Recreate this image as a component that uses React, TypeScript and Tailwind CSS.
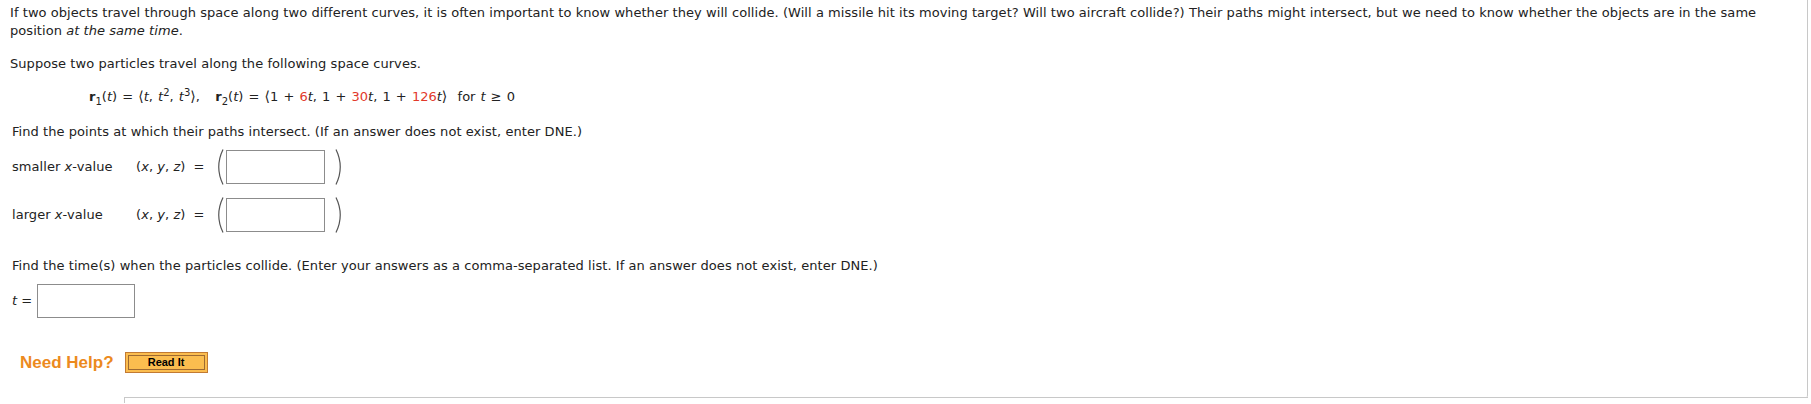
import React from "react";

const LParen = () => (
  <svg width="12" height="38" viewBox="0 0 12 38" className="block">
    <path d="M10 1.5 Q1.5 19 10 36.5" fill="none" stroke="#555" strokeWidth="1.2" />
  </svg>
);
const RParen = () => (
  <svg width="12" height="38" viewBox="0 0 12 38" className="block">
    <path d="M2 1.5 Q10.5 19 2 36.5" fill="none" stroke="#555" strokeWidth="1.2" />
  </svg>
);

const Red = ({ children }: { children: React.ReactNode }) => (
  <span className="text-[#e2392b]">{children}</span>
);

const PointRow = ({ label, className }: { label: React.ReactNode; className: string }) => (
  <div className={`flex items-center h-[34px] ${className}`}>
    <div className="w-[126px] pl-[2px]">{label}</div>
    <span>
      (<i>x</i>, <i>y</i>, <i>z</i>)
    </span>
    <span className="ml-[8px]">=</span>
    <div className="ml-[9px]">
      <LParen />
    </div>
    <div className="ml-[1px] w-[99px] h-[34px] border border-[#8c8c8c] bg-white" />
    <div className="ml-[9px]">
      <RParen />
    </div>
  </div>
);

export default function App() {
  return (
    <div
      className="w-[1811px] h-[404px] overflow-hidden bg-white text-[#222] text-[13px] leading-[18px] tracking-[0.06px]"
      style={{ fontFamily: '"DejaVu Sans", Verdana, sans-serif' }}
    >
      <div className="w-[1808px] h-[398px] border-r border-[#c8c8c8] rounded-br-[3px] pl-[10px] pt-[4px]">
        <p>
          If two objects travel through space along two different curves, it is often important to know whether they
          will collide. (Will a missile hit its moving target? Will two aircraft collide?) Their paths might intersect,
          but we need to know whether the objects are in the same
          <br />
          position <i>at the same time</i>.
        </p>
        <p className="mt-[15px]">Suppose two particles travel along the following space curves.</p>
        <div className="mt-[14px] ml-[79px] whitespace-pre text-[13px] [word-spacing:1px] tracking-normal">
          <b>r</b>
          <sub className="text-[10px] relative top-[4px]">1</sub>(<i>t</i>) = <span className="text-[14px]">⟨</span>
          <i>t</i>, <i>t</i>
          <sup className="text-[10px]">2</sup>, <i>t</i>
          <sup className="text-[10px]">3</sup>
          <span className="text-[14px]">⟩</span>,{"   "}
          <b>r</b>
          <sub className="text-[10px] relative top-[4px]">2</sub>(<i>t</i>) = <span className="text-[14px]">⟨</span>1 +{" "}
          <Red>6</Red>
          <i>t</i>, 1 + <Red>30</Red>
          <i>t</i>, 1 + <Red>126</Red>
          <i>t</i>
          <span className="text-[14px]">⟩</span>
          {"  "}for <i>t</i> ≥ 0
        </div>
        <p className="mt-[17px] pl-[2px]">
          Find the points at which their paths intersect. (If an answer does not exist, enter DNE.)
        </p>
        <PointRow
          className="mt-[9px]"
          label={
            <>
              smaller <i>x</i>-value
            </>
          }
        />
        <PointRow
          className="mt-[14px]"
          label={
            <>
              larger <i>x</i>-value
            </>
          }
        />
        <p className="mt-[25px] pl-[2px]">
          Find the time(s) when the particles collide. (Enter your answers as a comma-separated list. If an answer does
          not exist, enter DNE.)
        </p>
        <div className="mt-[9px] flex items-center h-[34px] pl-[2px]">
          <span>
            <i>t</i> =
          </span>
          <div className="ml-[5px] w-[98px] h-[34px] border border-[#8c8c8c]" />
        </div>
        <div className="mt-[34px] flex items-center pl-[10px]">
          <span
            className="text-[17px] font-bold text-[#ec8a1e] leading-[21px] tracking-normal"
            style={{ fontFamily: '"Liberation Sans", Arial, sans-serif' }}
          >
            Need Help?
          </span>
          <button
            className="ml-[11px] w-[83px] h-[21px] bg-[#fbbd4f] border border-[#c27a33] p-[2px] tracking-normal"
            style={{ fontFamily: '"Liberation Sans", Arial, sans-serif' }}
          >
            <div className="w-full h-full border border-[#9e6a32] flex items-center justify-center text-[11px] font-bold text-black leading-none">
              Read It
            </div>
          </button>
        </div>
      </div>
      <div className="ml-[124px] w-[1684px] h-[6px] border-t border-l border-[#c8c8c8] -mt-[1px]" />
    </div>
  );
}
